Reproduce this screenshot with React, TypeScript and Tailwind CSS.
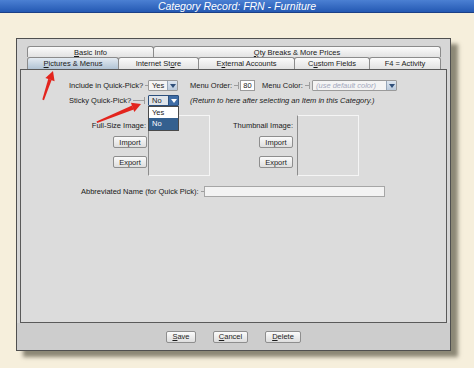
import React from 'react'

const font = "font-['Liberation_Sans',Arial,sans-serif]"

function Connector() {
  return (
    <div className="flex-1 flex items-center min-w-[5px] ml-[2px] mr-[3px]">
      <div className="flex-1 h-px bg-[#9d9d9d]" />
      <div className="w-px h-[7px] bg-[#9d9d9d]" />
    </div>
  )
}

function Arrow({ active }: { active?: boolean }) {
  return (
    <div
      className={`w-[10px] shrink-0 self-stretch flex items-center justify-center border-l ${
        active ? 'bg-[#3f6da6] border-[#2b4f7d]' : 'bg-gradient-to-b from-[#dde6f0] to-[#b9c9db] border-[#97a6b8]'
      }`}
    >
      <svg width="6" height="4" viewBox="0 0 6 4">
        <path d="M0 0 L6 0 L3 4 Z" fill={active ? '#ffffff' : '#2f4f7a'} />
      </svg>
    </div>
  )
}

function Combo({ value, w, active, disabled }: { value: string; w: string; active?: boolean; disabled?: boolean }) {
  return (
    <div
      className={`${w} shrink-0 h-[11px] flex items-stretch border rounded-[1px] ${
        active ? 'border-[#2b4f7d] bg-[#dfe4ea]' : 'border-[#9a9a9a] bg-[#f4f4f4]'
      }`}
    >
      <span
        className={`flex-1 pl-[3px] leading-[9px] overflow-hidden ${disabled ? 'italic text-[#a3a8bd]' : 'text-[#1d1d1d]'}`}
      >
        {value}
      </span>
      <Arrow active={active} />
    </div>
  )
}

function Btn({ children, w }: { children: React.ReactNode; w: string }) {
  return (
    <div
      className={`${w} h-[12px] flex items-center justify-center rounded-[2px] border border-[#8e8e8e] bg-gradient-to-b from-[#fbfbfb] to-[#dedede] text-[#1d1d1d]`}
    >
      {children}
    </div>
  )
}

function Tab({ children, w, selected }: { children: React.ReactNode; w: string; selected?: boolean }) {
  return (
    <div
      className={`${w} flex items-center justify-center border border-b-0 border-[#8b8b8b] rounded-t-[3px] -ml-px first:ml-0 ${
        selected ? 'bg-gradient-to-b from-[#e4ebf2] to-[#b1c3d4]' : 'bg-gradient-to-b from-[#fbfbfb] to-[#e2e2e2]'
      }`}
    >
      {children}
    </div>
  )
}

export default function App() {
  return (
    <div className={`${font} relative w-[474px] h-[368px] bg-[#f6efdc] overflow-hidden text-[7.5px] leading-[9px] text-[#1a1a1a] whitespace-nowrap`}>
      {/* Title bar */}
      <div className="h-[13px] bg-gradient-to-b from-[#4b80d3] to-[#2459b3] border-b border-[#1b3f86] flex items-center justify-center">
        <span className="text-white italic text-[10.5px] leading-[12px]">Category Record: FRN - Furniture</span>
      </div>

      <div className="pt-[25px] pl-[16px]">
        {/* Outer frame */}
        <div className="w-[435px] h-[313px] border border-[#4f4f4f] bg-[#d6d6d6] shadow-[7px_6px_4px_rgba(70,66,50,0.6)] flex flex-col pt-[7px] px-[3px]">
          {/* Tabs */}
          <div className="pl-[7px] flex flex-col">
            <div className="flex h-[11px]">
              <Tab w="w-[127px]"><span><u>B</u>asic Info</span></Tab>
              <Tab w="w-[288px]"><span><u>Q</u>ty Breaks &amp; More Prices</span></Tab>
            </div>
            <div className="flex h-[12px]">
              <Tab w="w-[92px]" selected><span><u>P</u>ictures &amp; Menus</span></Tab>
              <Tab w="w-[81px]"><span>Internet St<u>o</u>re</span></Tab>
              <Tab w="w-[97px]"><span>E<u>x</u>ternal Accounts</span></Tab>
              <Tab w="w-[76px]"><span>C<u>u</u>stom Fields</span></Tab>
              <Tab w="w-[72px]"><span>F4 = Activity</span></Tab>
            </div>
          </div>

          {/* Content pane */}
          <div className="h-[254px] border border-[#5a5a5a] bg-[#dcdcdc] flex flex-col pt-[10px]">
            {/* Row 1 */}
            <div className="flex items-center h-[11px] pl-[48px]">
              <div className="w-[79px] shrink-0 flex items-center">
                <span>Include in Quick-Pick?</span>
                <Connector />
              </div>
              <Combo value="Yes" w="w-[30px]" />
              <div className="w-[50px] shrink-0 flex items-center ml-[12px]">
                <span>Menu Order:</span>
                <Connector />
              </div>
              <div className="w-[15px] shrink-0 h-[11px] border border-[#9a9a9a] bg-white text-center leading-[9px]">80</div>
              <div className="w-[50px] shrink-0 flex items-center ml-[7px]">
                <span>Menu Color:</span>
                <Connector />
              </div>
              <Combo value="(use default color)" w="w-[85px]" disabled />
            </div>

            {/* Row 2 */}
            <div className="flex items-center h-[11px] pl-[48px] mt-[4px]">
              <div className="w-[79px] shrink-0 flex items-center">
                <span>Sticky Quick-Pick?</span>
                <Connector />
              </div>
              <div className="relative">
                <Combo value="No" w="w-[31px]" active />
                <div className="absolute left-0 top-[11px] w-[31px] border border-[#4a4a4a] bg-white z-10">
                  <div className="h-[11px] pl-[3px] leading-[11px]">Yes</div>
                  <div className="h-[12px] pl-[3px] leading-[12px] bg-[#34608f] text-white">No</div>
                </div>
              </div>
              <span className="ml-[11px] italic">(Return to here after selecting an Item in this Category.)</span>
            </div>

            {/* Images */}
            <div className="flex mt-[9px] h-[61px] pl-[48px]">
              <div className="w-[79px] flex flex-col items-end pr-[1px]">
                <span className="mt-[6px] pr-px">Full-Size Image:</span>
                <div className="mt-[6px]"><Btn w="w-[34px]">Import</Btn></div>
                <div className="mt-[8px]"><Btn w="w-[34px]">Export</Btn></div>
              </div>
              <div className="w-[62px] h-[61px] border border-[#f5f5f5] border-l-[#8c8c8c]" />
              <div className="w-[83px] flex flex-col items-end">
                <span className="mt-[6px]">Thumbnail Image:</span>
                <div className="mt-[6px]"><Btn w="w-[34px]">Import</Btn></div>
                <div className="mt-[8px]"><Btn w="w-[34px]">Export</Btn></div>
              </div>
              <div className="w-[62px] h-[61px] ml-[4px] border border-[#f5f5f5] border-l-[#8c8c8c]" />
            </div>

            {/* Abbreviated name */}
            <div className="flex items-center h-[11px] mt-[10px] pl-[60px]">
              <div className="w-[123px] shrink-0 flex items-center">
                <span>Abbreviated Name (for Quick Pick):</span>
                <Connector />
              </div>
              <div className="w-[181px] h-[11px] border border-[#a6a6a6] bg-[#f3f3f3]" />
            </div>
          </div>

          {/* Bottom buttons */}
          <div className="flex-1 bg-[#cdcdcd] -mx-[3px] flex items-center justify-center gap-[17px]">
            <Btn w="w-[30px]"><span><u>S</u>ave</span></Btn>
            <Btn w="w-[35px]"><span><u>C</u>ancel</span></Btn>
            <Btn w="w-[36px]"><span><u>D</u>elete</span></Btn>
          </div>
        </div>
      </div>

      {/* Red annotation arrows */}
      <svg className="absolute inset-0 pointer-events-none" width="474" height="368" viewBox="0 0 474 368">
        <polygon points="42.3,99.5 44.0,100.2 51.6,79.9 48.3,78.7" fill="#e3251e" />
        <polygon points="53,71 54.6,81.3 45.4,78.0" fill="#e3251e" />
        <polygon points="96.5,121.5 97.2,123.0 133.7,109.5 132.0,105.5" fill="#e3251e" />
        <polygon points="141,104 134.3,112.0 130.9,102.7" fill="#e3251e" />
      </svg>
    </div>
  )
}
